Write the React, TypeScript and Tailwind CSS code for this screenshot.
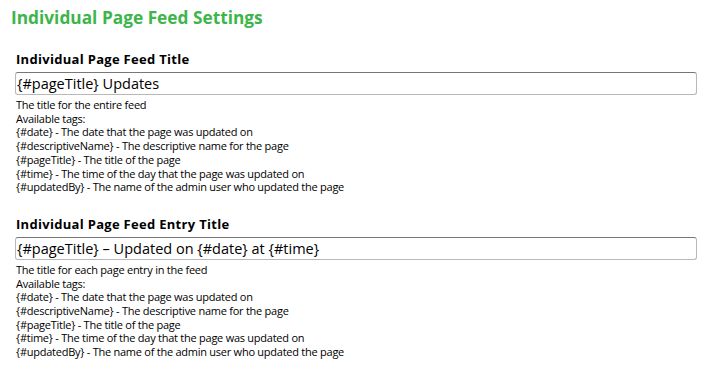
import React from 'react'

const tags: [string, string][] = [
  ['{#date}', 'The date that the page was updated on'],
  ['{#descriptiveName}', 'The descriptive name for the page'],
  ['{#pageTitle}', 'The title of the page'],
  ['{#time}', 'The time of the day that the page was updated on'],
  ['{#updatedBy}', 'The name of the admin user who updated the page'],
]

interface FieldProps {
  label: string
  value: string
  help: string
}

const Field: React.FC<FieldProps> = ({ label, value, help }) => (
  <div className="pl-[15px] pr-[20px]">
    <h3 className="font-['Open_Sans',sans-serif] font-bold text-[13px] leading-[16px] tracking-[0.3px] text-black pl-px">
      {label}
    </h3>
    <div className="mt-[5px] h-[23px] border border-[#b8b8b8] border-t-[#777] rounded-[3px] bg-white flex items-center px-[1px] font-['Open_Sans',sans-serif] text-[14.5px] text-black">
      {value}
    </div>
    <div className="mt-[3px] font-['Open_Sans',sans-serif] text-[11px] leading-[13.7px] tracking-[-0.25px] text-black pl-px">
      <p>{help}</p>
      <p>Available tags:</p>
      {tags.map(([tag, desc]) => (
        <p key={tag}>
          {tag} - {desc}
        </p>
      ))}
    </div>
  </div>
)

export default function App() {
  return (
    <div className="w-[717px] h-[378px] bg-white overflow-hidden">
      <h1 className="pl-[11px] pt-[7px] font-['Open_Sans',sans-serif] font-bold text-[17.3px] leading-[22px] text-[#3db54a]">
        Individual Page Feed Settings
      </h1>
      <div className="mt-[22px]">
        <Field
          label="Individual Page Feed Title"
          value="{#pageTitle} Updates"
          help="The title for the entire feed"
        />
      </div>
      <div className="mt-[22px]">
        <Field
          label="Individual Page Feed Entry Title"
          value="{#pageTitle} – Updated on {#date} at {#time}"
          help="The title for each page entry in the feed"
        />
      </div>
    </div>
  )
}
